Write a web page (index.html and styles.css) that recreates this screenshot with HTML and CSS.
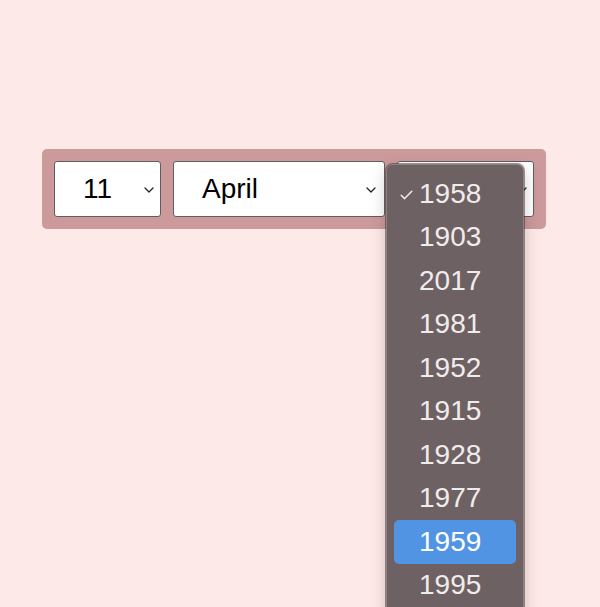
FILE: index.html
```html
<!DOCTYPE html>
<html>
<head>
<meta charset="utf-8">
<link rel="stylesheet" href="styles.css">
</head>
<body>
<div class="page">
  <div class="bar">
    <div class="select select-day">
      <span class="value">11</span>
      <svg class="chev" width="10" height="6" viewBox="0 0 10 6"><path d="M1 1 L5 5 L9 1" fill="none" stroke="#222" stroke-width="1.3" stroke-linecap="round" stroke-linejoin="round"/></svg>
    </div>
    <div class="select select-month">
      <span class="value">April</span>
      <svg class="chev" width="10" height="6" viewBox="0 0 10 6"><path d="M1 1 L5 5 L9 1" fill="none" stroke="#222" stroke-width="1.3" stroke-linecap="round" stroke-linejoin="round"/></svg>
    </div>
    <div class="select select-year">
      <svg class="chev" width="10" height="6" viewBox="0 0 10 6"><path d="M1 1 L5 5 L9 1" fill="none" stroke="#222" stroke-width="1.3" stroke-linecap="round" stroke-linejoin="round"/></svg>
      <div class="menu">
        <div class="opt">
          <svg class="check" width="13" height="10" viewBox="0 0 13 10"><path d="M1.2 5.2 L4.6 8.6 L11.8 1.2" fill="none" stroke="#f1ecec" stroke-width="1.5" stroke-linecap="round" stroke-linejoin="round"/></svg>
          1958
        </div>
        <div class="opt">1903</div>
        <div class="opt">2017</div>
        <div class="opt">1981</div>
        <div class="opt">1952</div>
        <div class="opt">1915</div>
        <div class="opt">1928</div>
        <div class="opt">1977</div>
        <div class="opt opt-active">1959</div>
        <div class="opt">1995</div>
      </div>
    </div>
  </div>
</div>
</body>
</html>
```
FILE: styles.css
```css
html, body {
  margin: 0;
  height: 100%;
  overflow: hidden;
  background: #fee9e9;
  font-family: "Liberation Sans", Arial, sans-serif;
}

.page {
  padding: 149px 0 0 42px;
}

.bar {
  display: inline-flex;
  gap: 12px;
  padding: 12px;
  background: #cd9a9b;
  border-radius: 5px;
}

.select {
  position: relative;
  box-sizing: border-box;
  height: 56px;
  background: #fff;
  border: 1px solid #5e5e5e;
  border-radius: 3px;
  display: flex;
  align-items: center;
  padding-left: 28px;
  font-size: 28px;
  color: #000;
}

.select-day { width: 107px; }
.select-month { width: 212px; }
.select-year { width: 137px; }

.chev {
  position: absolute;
  right: 6px;
  top: 25px;
}

.select-month .chev { right: 8px; }

.menu {
  position: absolute;
  left: -12px;
  top: 2px;
  width: 138px;
  height: 480px;
  box-sizing: border-box;
  padding: 7px 7px;
  background: #6e6163;
  border: 1px solid #8d8183;
  border-radius: 7px;
  box-shadow: 0 0 0 1px rgba(40, 30, 32, 0.45), 0 6px 16px rgba(60, 30, 30, 0.25);
}

.opt {
  position: relative;
  height: 43.5px;
  display: flex;
  align-items: center;
  padding-left: 25px;
  border-radius: 5px;
  font-size: 28px;
  color: #f1ecec;
}

.opt-active {
  background: #5294e4;
  color: #fff;
}

.check {
  position: absolute;
  left: 6px;
  top: 18px;
}
```
